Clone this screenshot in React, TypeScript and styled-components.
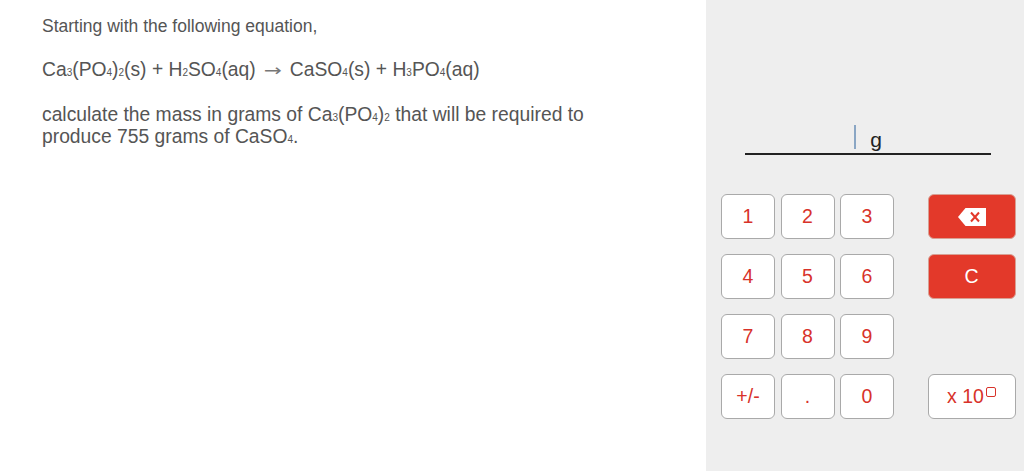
import React from "react";
import styled, { createGlobalStyle } from "styled-components";

const Global = createGlobalStyle`
  html, body { margin: 0; padding: 0; }
  body { font-family: "Liberation Sans", Arial, sans-serif; background: #fff; }
`;

const Page = styled.div`
  display: flex;
  width: 1024px;
  height: 471px;
  overflow: hidden;
`;

const Question = styled.div`
  width: 706px;
  flex: none;
  box-sizing: border-box;
  padding: 15px 0 0 42px;
  color: #555;
  line-height: 22px;
`;

const Para = styled.p<{ $mt?: number; $size?: number }>`
  margin: ${(p) => p.$mt ?? 0}px 0 0 0;
  width: 570px;
  font-size: ${(p) => p.$size ?? 19.3}px;
`;

const Sub = styled.sub`
  font-size: 10px;
  vertical-align: 0px;
  line-height: 0;
`;

const Arrow = styled.span`
  font-family: "DejaVu Sans", sans-serif;
  font-size: 16px;
  display: inline-block;
  transform: scaleX(1.35);
  margin: 0 5px;
  color: #777;
`;

const Side = styled.div`
  flex: 1;
  background: #eeeeee;
  display: flex;
  flex-direction: column;
  padding: 0 0 0 15px;
`;

const AnswerRow = styled.div`
  margin: 125px 0 0 24px;
  width: 246px;
  height: 30px;
  border-bottom: 2px solid #222;
  display: flex;
  justify-content: center;
  align-items: flex-end;
  gap: 14px;
  box-sizing: border-box;
  padding: 0 0 3px 0;
`;

const Cursor = styled.span`
  width: 2px;
  height: 24px;
  background: #8aa6c4;
  margin-bottom: 1px;
`;

const Unit = styled.span`
  font-size: 21px;
  color: #222;
  line-height: 21px;
`;

const Pad = styled.div`
  margin-top: 39px;
  display: grid;
  grid-template-columns: 54px 54px 54px 116px;
  grid-auto-rows: 45px;
  column-gap: 5.5px;
  row-gap: 15px;
`;

const Key = styled.button<{ $col?: number }>`
  grid-column: ${(p) => p.$col ?? "auto"};
  justify-self: ${(p) => (p.$col === 4 ? "end" : "stretch")};
  width: ${(p) => (p.$col === 4 ? "88px" : "auto")};
  box-sizing: border-box;
  border: 1px solid #a9a9a9;
  border-radius: 6px;
  background: #fff;
  color: #d8322a;
  font-family: "Liberation Sans", Arial, sans-serif;
  font-size: 19.5px;
  padding: 0;
  display: flex;
  align-items: center;
  justify-content: center;
`;

const RedKey = styled(Key)`
  background: #e3392a;
  border-color: #d8a094;
  color: #fff;
`;

const Exp = styled.span`
  display: inline-block;
  width: 10px;
  height: 10px;
  border: 1.4px solid #d8322a;
  border-radius: 2px;
  margin: -9px 0 0 2px;
  box-sizing: border-box;
`;

const Backspace = () => (
  <svg width="28" height="18" viewBox="0 0 28 18">
    <path d="M7.5 0 H28 V18 H7.5 L0 9 Z" fill="#fff" />
    <path d="M13 4.5 L21 13.5 M21 4.5 L13 13.5" stroke="#e3392a" strokeWidth="2" />
  </svg>
);

export default function App() {
  return (
    <Page>
      <Global />
      <Question>
        <Para $size={17.5}>Starting with the following equation,</Para>
        <Para $mt={22}>
          Ca<Sub>3</Sub>(PO<Sub>4</Sub>)<Sub>2</Sub>(s) + H<Sub>2</Sub>SO<Sub>4</Sub>(aq) <Arrow>→</Arrow> CaSO<Sub>4</Sub>(s) + H<Sub>3</Sub>PO<Sub>4</Sub>(aq)
        </Para>
        <Para $mt={22}>
          calculate the mass in grams of Ca<Sub>3</Sub>(PO<Sub>4</Sub>)<Sub>2</Sub> that will be required to produce 755 grams of CaSO<Sub>4</Sub>.
        </Para>
      </Question>
      <Side>
        <AnswerRow>
          <Cursor />
          <Unit>g</Unit>
        </AnswerRow>
        <Pad>
          <Key>1</Key>
          <Key>2</Key>
          <Key>3</Key>
          <RedKey $col={4}><Backspace /></RedKey>
          <Key>4</Key>
          <Key>5</Key>
          <Key>6</Key>
          <RedKey $col={4}>C</RedKey>
          <Key>7</Key>
          <Key>8</Key>
          <Key>9</Key>
          <Key $col={1}>+/-</Key>
          <Key>.</Key>
          <Key>0</Key>
          <Key $col={4}>x 10<Exp /></Key>
        </Pad>
      </Side>
    </Page>
  );
}
